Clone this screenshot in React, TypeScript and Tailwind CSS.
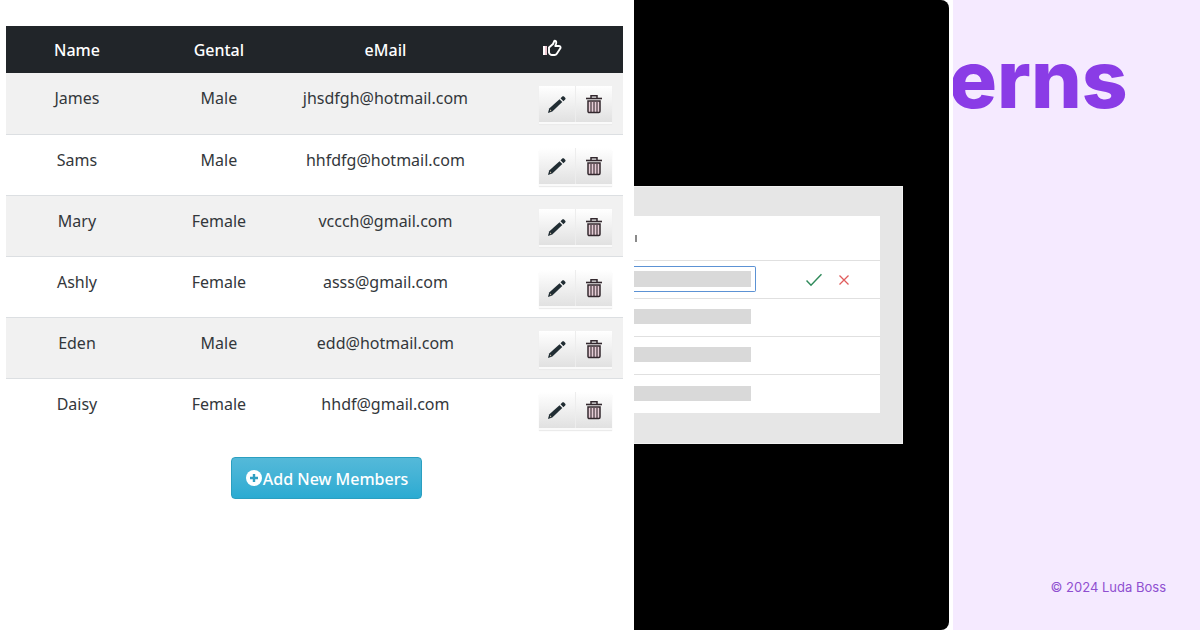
import React from "react";

type Member = { name: string; gender: string; email: string };

const members: Member[] = [
  { name: "James", gender: "Male", email: "jhsdfgh@hotmail.com" },
  { name: "Sams", gender: "Male", email: "hhfdfg@hotmail.com" },
  { name: "Mary", gender: "Female", email: "vccch@gmail.com" },
  { name: "Ashly", gender: "Female", email: "asss@gmail.com" },
  { name: "Eden", gender: "Male", email: "edd@hotmail.com" },
  { name: "Daisy", gender: "Female", email: "hhdf@gmail.com" },
];

function ThumbIcon() {
  return (
    <svg className="mx-auto -mt-1 block" width="20" height="18" viewBox="0 0 20 18" aria-hidden="true">
      <path d="M1 7h2v9H1z" fill="#fff" />
      <path d="M3 7h2v9H3z" fill="#f0c9d2" />
      <path
        d="M7 13.500V8.500l4-3.500 1.500-3.300c1.600 0 2 1.300 1.600 2.800L13.300 7H17c1.700 0 1.900 1.700 1.200 2.600l-3.400 5.200c-.5.800-1.200 1.200-2.200 1.200H10c-1.500 0-2.500-1-3-2.500z"
        fill="none"
        stroke="#fff"
        strokeWidth="1.9"
        strokeLinejoin="round"
      />
    </svg>
  );
}

function PencilIcon() {
  return (
    <svg width="20" height="20" viewBox="0 0 20 20" fill="#212d33" aria-hidden="true">
      <path d="M1 19l1.200-4.500L12.500 5.200l2.800 2.800L5.300 17.600z" />
      <path d="M13.500 4.300l1.800-1.700c.5-.5 1.200-.5 1.700 0l1.200 1.200c.5.5.5 1.200 0 1.700l-1.800 1.700z" />
      <path d="M3 15.300l1.400 1.400-1.400.5z" fill="#c9bda8" />
    </svg>
  );
}

function TrashIcon() {
  return (
    <svg width="18" height="20" viewBox="0 0 18 20" fill="none" stroke="#33282e" aria-hidden="true">
      <path d="M1 4.500h16" strokeWidth="1.600" />
      <path d="M6 4V1.700h6V4" strokeWidth="1.500" />
      <path d="M3 7h12v10.300c0 .7-.5 1.200-1.200 1.200H4.200c-.7 0-1.200-.5-1.200-1.200z" strokeWidth="1.500" fill="#e6cdd6" />
      <path d="M6 8v10M9 8v10M12 8v10" strokeWidth="1.100" />
    </svg>
  );
}

function MembersPanel() {
  return (
    <section className="bg-white pt-[26px] pr-[11px] pl-[6px] font-['Noto_Sans','Open_Sans',sans-serif] text-[16px] leading-6 text-[#33373b]">
      <table className="w-full table-fixed border-collapse text-center">
        <colgroup>
          <col className="w-[23%]" />
          <col className="w-[23%]" />
          <col className="w-[31%]" />
          <col className="w-[23%]" />
        </colgroup>
        <thead className="bg-[#212529] text-white">
          <tr className="h-[47px]">
            <th className="font-medium">Name</th>
            <th className="font-medium">Gental</th>
            <th className="font-medium">eMail</th>
            <th aria-label="Actions">
              <ThumbIcon />
            </th>
          </tr>
        </thead>
        <tbody>
          {members.map((m) => (
            <tr key={m.name} className="h-[61px] border-b border-[#dcdfe2] align-top last:border-b-0 odd:bg-[#f1f1f1] even:bg-white">
              <td className="pt-[13px]">{m.name}</td>
              <td className="pt-[13px]">{m.gender}</td>
              <td className="pt-[13px]">{m.email}</td>
              <td className="pt-[13px] pr-[11px]">
                <div className="ml-auto flex h-9 w-[73px] bg-linear-to-b from-white to-[#e1e1e1] shadow-[0_2px_0_#fafafa,0_3px_1px_#ebebeb]">
                  <button type="button" aria-label={`Edit ${m.name}`} className="flex flex-1 items-center justify-center border-r border-[#ededed]">
                    <PencilIcon />
                  </button>
                  <button type="button" aria-label={`Delete ${m.name}`} className="flex flex-1 items-center justify-center">
                    <TrashIcon />
                  </button>
                </div>
              </td>
            </tr>
          ))}
        </tbody>
      </table>
      <div className="flex justify-center pt-[18px] pl-6">
        <button
          type="button"
          className="flex h-[42px] items-center rounded-[4px] border border-[#2b9fc0] bg-linear-to-b from-[#54b9d9] to-[#2aabd2] px-[13px] pt-[2px] font-medium text-white"
        >
          <svg width="18" height="18" viewBox="0 0 18 18" aria-hidden="true">
            <circle cx="9" cy="8" r="8" fill="#fff" />
            <path d="M9 4v8M5 8h8" stroke="#2f9fc2" strokeWidth="2.400" />
          </svg>
          Add New Members
        </button>
      </div>
    </section>
  );
}

function InlineEditPanel() {
  return (
    <section className="flex items-center rounded-r-lg bg-black pr-[46px]">
      <div className="w-full border-y border-r border-[#f1f1f1] bg-[#e6e6e6] pt-[29px] pr-[22px] pb-[30px]">
        <div className="bg-white">
          <div className="flex h-[45px] items-center border-b border-[#e0e0e0] pl-px">
            <span className="h-[7px] w-[2px] bg-[#8a8a8a]" />
          </div>
          <div className="flex h-[38px] items-center border-b border-[#e0e0e0]">
            <input
              type="text"
              aria-label="Edit value"
              className="mb-[2px] h-[26px] w-[122px] rounded-r-[2px] border border-l-0 border-[#5c92d4] bg-[#d9d9d9] bg-clip-content py-1 pr-1"
            />
            <div className="ml-auto flex items-center gap-4 pr-[30px]">
              <button type="button" aria-label="Save">
                <svg width="16" height="14" viewBox="0 0 16 14" fill="none" stroke="#2f8a5a" strokeWidth="1.500" aria-hidden="true">
                  <path d="M.5 7.500l4.500 4.700L15.500 1.300" />
                </svg>
              </button>
              <button type="button" aria-label="Cancel">
                <svg width="12" height="12" viewBox="0 0 12 12" fill="none" stroke="#e05c5c" strokeWidth="1.300" aria-hidden="true">
                  <path d="M1.500 1.500l9 9M10.500 1.500l-9 9" />
                </svg>
              </button>
            </div>
          </div>
          {[0, 1, 2].map((row) => (
            <div key={row} className="flex h-[38px] items-center border-b border-[#e0e0e0] last:border-b-0">
              <div className="mb-[2px] h-[15px] w-[117px] bg-[#d9d9d9]" />
            </div>
          ))}
        </div>
      </div>
    </section>
  );
}

function TitlePanel() {
  return (
    <section className="ml-1 flex flex-col justify-between overflow-hidden bg-[#f5eaff] pt-[31px] pb-[33px] text-[#8a3ce6]">
      <h1 className="-ml-1 font-['Inter',sans-serif] text-[80px] leading-[96px] font-extrabold">erns</h1>
      <p className="pr-[34px] text-right font-['Inter',sans-serif] text-[13px] leading-5 text-[#8f4fd0]">© 2024 Luda Boss</p>
    </section>
  );
}

export default function App() {
  return (
    <main className="grid min-h-screen grid-cols-[634fr_315fr_251fr] bg-white">
      <MembersPanel />
      <InlineEditPanel />
      <TitlePanel />
    </main>
  );
}
